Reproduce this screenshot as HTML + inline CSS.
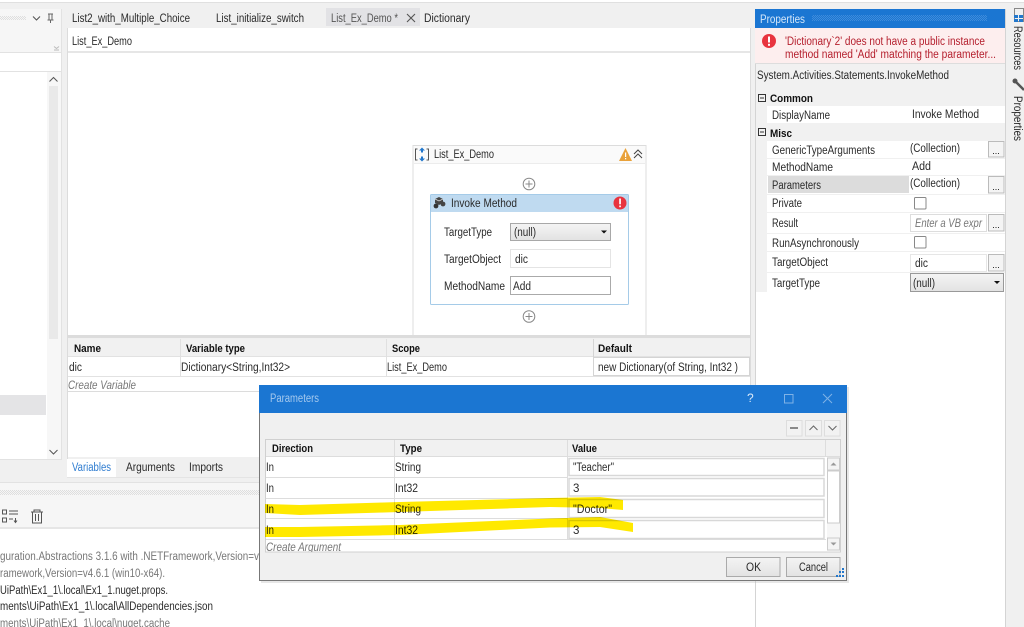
<!DOCTYPE html>
<html><head><meta charset="utf-8"><style>
html,body{margin:0;padding:0;background:#f0f0f0;width:1024px;height:627px;overflow:hidden}
svg{display:block;filter:blur(.3px)}
text{font-family:"Liberation Sans",sans-serif;font-size:11.5px;fill:#2a2a2a}
.b{font-weight:bold;fill:#111;font-size:11px}
.i{font-style:italic;fill:#777}
.g{fill:#777}
</style></head><body>
<svg width="1024" height="627" viewBox="0 0 1024 627" xmlns="http://www.w3.org/2000/svg">
<defs>
<pattern id="d" width="2" height="2" patternUnits="userSpaceOnUse"><rect width="1" height="1" fill="#dedede"/><rect x="1" y="1" width="1" height="1" fill="#dedede"/></pattern>
<pattern id="dw" width="2" height="2" patternUnits="userSpaceOnUse"><rect width="1" height="1" fill="#3f8cdb"/><rect x="1" y="1" width="1" height="1" fill="#3f8cdb"/></pattern>
<linearGradient id="cb" x1="0" y1="0" x2="0" y2="1"><stop offset="0" stop-color="#f4f4f4"/><stop offset="1" stop-color="#e2e2e2"/></linearGradient>
<clipPath id="ca"><rect x="260" y="535" width="300" height="17"/></clipPath>
</defs>
<rect width="1024" height="627" fill="#f0f0f0"/>
<rect width="1024" height="2" fill="#fff"/><rect y="2" width="1024" height="1" fill="#e0e0e0"/>

<!-- left panel -->
<rect x="0" y="9" width="61" height="43" fill="#f6f6f6"/>
<rect x="0" y="16" width="26" height="4" fill="url(#d)"/>
<path d="M33 16.500l3.500 3.500 3.500-3.500" fill="none" stroke="#555" stroke-width="1.100"/>
<path d="M48 14h5M49 14v6h3v-6M50.500 20v3M47.500 20h6" fill="none" stroke="#666" stroke-width="1"/>
<path d="M54 46.500l2.500 2 2.500-2M54 50h5" fill="none" stroke="#bbb" stroke-width="1"/>
<rect x="0" y="52" width="61" height="1" fill="#e2e2e2"/>
<rect x="0" y="53" width="61" height="18" fill="#fff"/>
<rect x="0" y="71" width="61" height="1" fill="#e2e2e2"/>
<rect x="0" y="72" width="47" height="387" fill="#fff"/>
<rect x="47" y="72" width="14" height="387" fill="#f7f7f7"/>
<rect x="49" y="86" width="9" height="253" fill="#e9e9e9"/>
<path d="M49.500 81.500l4-4 4 4" fill="none" stroke="#555" stroke-width="1"/>
<path d="M49.500 450l4 4 4-4" fill="none" stroke="#555" stroke-width="1"/>
<rect x="0" y="395" width="46" height="20" fill="#e4e4e6"/>
<rect x="61" y="9" width="1" height="451" fill="#e2e2e2"/>
<rect x="0" y="459" width="61" height="1" fill="#e2e2e2"/>

<!-- tabs -->
<text x="72" y="22" textLength="118" lengthAdjust="spacingAndGlyphs">List2_with_Multiple_Choice</text>
<text x="216" y="22" textLength="88" lengthAdjust="spacingAndGlyphs">List_initialize_switch</text>
<rect x="326" y="8" width="94" height="18" fill="#e2e2e5"/>
<text x="331" y="22" textLength="67" lengthAdjust="spacingAndGlyphs" style="fill:#555">List_Ex_Demo *</text>
<path d="M407 14l8 8M415 14l-8 8" stroke="#555" stroke-width="1.100" fill="none"/>
<text x="424" y="22" textLength="46" lengthAdjust="spacingAndGlyphs">Dictionary</text>

<!-- designer -->
<rect x="67" y="28" width="684" height="23" fill="#fff"/>
<text x="72" y="45" textLength="60" lengthAdjust="spacingAndGlyphs">List_Ex_Demo</text>
<rect x="67" y="51" width="684" height="2" fill="#e6e6e6"/>
<rect x="67" y="53" width="684" height="282" fill="#fff"/>
<rect x="67" y="28" width="1" height="432" fill="#dcdcdc"/>
<rect x="750" y="28" width="1" height="432" fill="#dcdcdc"/>
<rect x="67" y="335" width="684" height="3" fill="#dcdcdc"/>

<!-- sequence -->
<rect x="413" y="145.500" width="233" height="190" fill="#fff" stroke="#dcdcdc"/>
<rect x="414" y="146" width="231" height="17" fill="#fafafa"/>
<rect x="414" y="163" width="231" height="1" fill="#ececec"/>
<path d="M417.500 149h-2v11h2M426.500 149h2v11h-2" fill="none" stroke="#555" stroke-width="1"/>
<path d="M422 147.500l-3 3h2v2h2v-2h2zM422 161.500l-3-3h2v-2h2v2h2z" fill="#2277cc"/>
<text x="434" y="158" textLength="60" lengthAdjust="spacingAndGlyphs">List_Ex_Demo</text>
<path d="M625.500 148l6.500 13h-13z" fill="#e9a23b"/><rect x="625" y="152.500" width="1.200" height="4.500" fill="#fff"/><rect x="625" y="158" width="1.200" height="1.300" fill="#fff"/>
<path d="M634 154l4-4 4 4M634 158l4-4 4 4" fill="none" stroke="#444" stroke-width="1"/>
<circle cx="529" cy="184" r="5.800" fill="#fff" stroke="#888"/><path d="M525.500 184h7M529 180.500v7" stroke="#888"/>
<circle cx="529" cy="316.500" r="5.800" fill="#fff" stroke="#888"/><path d="M525.500 316.500h7M529 313v7" stroke="#888"/>

<rect x="430.500" y="194.500" width="198" height="110" rx="1" fill="#fff" stroke="#a5cbe8"/>
<rect x="431" y="195" width="197" height="17" fill="#bfdaf0"/>
<path d="M439 197l4 2v4l-4 2-4-2v-4z" fill="#444"/><circle cx="436" cy="206" r="2.400" fill="#333"/><circle cx="443" cy="204" r="2.400" fill="#444"/><path d="M435 199l4 2 4-2" stroke="#ddd" fill="none" stroke-width=".7"/>
<text x="451" y="207" textLength="66" lengthAdjust="spacingAndGlyphs">Invoke Method</text>
<circle cx="620" cy="203" r="6.500" fill="#e8343f"/><rect x="619.200" y="198.500" width="1.700" height="5.800" fill="#fff"/><rect x="619.200" y="205.500" width="1.700" height="1.700" fill="#fff"/>
<text x="444" y="236" textLength="48" lengthAdjust="spacingAndGlyphs">TargetType</text>
<text x="444" y="263" textLength="57" lengthAdjust="spacingAndGlyphs">TargetObject</text>
<text x="444" y="290" textLength="61" lengthAdjust="spacingAndGlyphs">MethodName</text>
<rect x="510.500" y="223.500" width="100" height="17" fill="url(#cb)" stroke="#a8a8a8"/>
<text x="514" y="236" textLength="22" lengthAdjust="spacingAndGlyphs">(null)</text>
<path d="M601 230.500h6l-3 3z" fill="#111"/>
<rect x="510.500" y="249.500" width="100" height="18" fill="#fff" stroke="#e4e4e4"/>
<text x="515" y="263" textLength="13" lengthAdjust="spacingAndGlyphs">dic</text>
<rect x="510.500" y="276.500" width="100" height="18" fill="#fff" stroke="#aaa"/>
<text x="513" y="290" textLength="18" lengthAdjust="spacingAndGlyphs">Add</text>

<!-- variables panel -->
<rect x="68" y="339" width="682" height="18" fill="#f1f1f1"/>
<rect x="68" y="357" width="682" height="19" fill="#fff"/>
<rect x="68" y="376" width="682" height="1" fill="#e2e2e2"/>
<rect x="68" y="356" width="682" height="1" fill="#e2e2e2"/>
<rect x="68" y="377" width="682" height="14" fill="#fff"/>
<rect x="68" y="391" width="682" height="1" fill="#dcdcdc"/>
<rect x="68" y="392" width="682" height="65" fill="#fff"/>
<rect x="180" y="339" width="1" height="37" fill="#e0e0e0"/><rect x="386" y="339" width="1" height="37" fill="#e0e0e0"/><rect x="593" y="339" width="1" height="37" fill="#d4d4d4"/>
<text class="b" x="74" y="352" textLength="27" lengthAdjust="spacingAndGlyphs">Name</text>
<text class="b" x="186" y="352" textLength="59" lengthAdjust="spacingAndGlyphs">Variable type</text>
<text class="b" x="392" y="352" textLength="28" lengthAdjust="spacingAndGlyphs">Scope</text>
<text class="b" x="598" y="352" textLength="34" lengthAdjust="spacingAndGlyphs">Default</text>
<text x="69" y="371" textLength="13" lengthAdjust="spacingAndGlyphs">dic</text>
<text x="181" y="371" textLength="109" lengthAdjust="spacingAndGlyphs">Dictionary&lt;String,Int32&gt;</text>
<text x="387" y="371" textLength="60" lengthAdjust="spacingAndGlyphs">List_Ex_Demo</text>
<text x="598" y="371" textLength="140" lengthAdjust="spacingAndGlyphs">new Dictionary(of String, Int32 )</text>
<rect x="593.500" y="357.500" width="156" height="18" fill="none" stroke="#d4d4d4"/>
<text class="i" x="68" y="389" textLength="68" lengthAdjust="spacingAndGlyphs">Create Variable</text>
<rect x="67" y="459" width="49" height="19" fill="#fff"/>
<text x="72" y="471" textLength="39" lengthAdjust="spacingAndGlyphs" style="fill:#2e7cd0">Variables</text>
<text x="126" y="471" textLength="49" lengthAdjust="spacingAndGlyphs">Arguments</text>
<text x="189" y="471" textLength="34" lengthAdjust="spacingAndGlyphs">Imports</text>
<rect x="67" y="477" width="684" height="1" fill="#e4e4e4"/>
<rect x="0" y="482" width="755" height="1" fill="#e2e2e2"/>

<!-- output panel -->
<rect x="0" y="483" width="755" height="44" fill="#f6f6f6"/>
<rect x="0" y="490" width="755" height="5" fill="url(#d)"/>
<rect x="2.500" y="510" width="4" height="4" fill="none" stroke="#555"/><rect x="2.500" y="518" width="4" height="4" fill="none" stroke="#555"/>
<path d="M9 511h9M9 514h9M9 519h4M15.500 518v4M14 520.500l1.500 2 1.500-2" stroke="#555" fill="none"/>
<path d="M31 512h12M34 512v-2h6v2M32.500 512v11h9v-11M35.500 514v7M38.500 514v7" stroke="#555" fill="none"/>
<rect x="0" y="527" width="755" height="2" fill="#e6e6e6"/>
<rect x="0" y="529" width="755" height="98" fill="#fff"/>
<text class="g" x="0" y="560" textLength="259" lengthAdjust="spacingAndGlyphs">guration.Abstractions 3.1.6 with .NETFramework,Version=v</text>
<text class="g" x="0" y="577" textLength="165" lengthAdjust="spacingAndGlyphs">ramework,Version=v4.6.1 (win10-x64).</text>
<text x="0" y="594" textLength="168" lengthAdjust="spacingAndGlyphs">UiPath\Ex1_1\.local\Ex1_1.nuget.props.</text>
<text x="0" y="610" textLength="213" lengthAdjust="spacingAndGlyphs">ments\UiPath\Ex1_1\.local\AllDependencies.json</text>
<text class="g" x="0" y="627" textLength="170" lengthAdjust="spacingAndGlyphs">ments\UiPath\Ex1_1\.local\nuget.cache</text>

<!-- properties -->
<rect x="755" y="9" width="250" height="618" fill="#fff"/>
<rect x="755" y="63" width="250" height="229" fill="#f1f1f1"/>
<rect x="755" y="63" width="1" height="564" fill="#d4d4d4"/><rect x="1005" y="9" width="1" height="618" fill="#d4d4d4"/>
<rect x="755" y="9" width="250" height="19" fill="#1b76d2"/>
<rect x="812" y="15" width="175" height="6" fill="url(#dw)"/>
<text x="760" y="23" textLength="45" lengthAdjust="spacingAndGlyphs" style="fill:#d5e7f9">Properties</text>
<rect x="755" y="28" width="250" height="35" fill="#fdeeee"/>
<circle cx="769" cy="41" r="7" fill="#e8343f"/><rect x="768" y="36.500" width="2" height="6" fill="#fff"/><rect x="768" y="43.800" width="2" height="2" fill="#fff"/>
<text x="785" y="45" textLength="200" lengthAdjust="spacingAndGlyphs" style="fill:#b5202e">'Dictionary`2' does not have a public instance</text>
<text x="785" y="58" textLength="211" lengthAdjust="spacingAndGlyphs" style="fill:#b5202e">method named 'Add' matching the parameter...</text>
<rect x="755" y="63" width="250" height="1" fill="#ddd"/>
<text x="757" y="79" textLength="192" lengthAdjust="spacingAndGlyphs">System.Activities.Statements.InvokeMethod</text>
<rect x="758.500" y="94.500" width="7" height="7" fill="none" stroke="#333"/><path d="M760 98h4" stroke="#333"/>
<text class="b" x="770" y="102" textLength="43" lengthAdjust="spacingAndGlyphs">Common</text>
<rect x="767" y="106" width="238" height="17" fill="#fff"/>
<text x="772" y="119" textLength="58" lengthAdjust="spacingAndGlyphs">DisplayName</text>
<text x="912" y="118" textLength="67" lengthAdjust="spacingAndGlyphs">Invoke Method</text>
<rect x="758.500" y="128.500" width="7" height="7" fill="none" stroke="#333"/><path d="M760 132h4" stroke="#333"/>
<text class="b" x="770" y="137" textLength="22" lengthAdjust="spacingAndGlyphs">Misc</text>
<rect x="767" y="141" width="238" height="151" fill="#fff"/>
<path d="M767 158.500h238M767 175.500h238M767 194.500h238M767 212.500h238M767 233.500h238M767 251.500h238M767 272.500h238" stroke="#f0f0f0"/>
<rect x="768" y="176" width="141" height="17" fill="#dcdcdc"/>
<text x="772" y="154" textLength="103" lengthAdjust="spacingAndGlyphs">GenericTypeArguments</text>
<text x="910" y="152" textLength="50" lengthAdjust="spacingAndGlyphs">(Collection)</text>
<text x="772" y="171" textLength="61" lengthAdjust="spacingAndGlyphs">MethodName</text>
<text x="912" y="170" textLength="19" lengthAdjust="spacingAndGlyphs">Add</text>
<text x="772" y="189" textLength="49" lengthAdjust="spacingAndGlyphs">Parameters</text>
<text x="910" y="187" textLength="50" lengthAdjust="spacingAndGlyphs">(Collection)</text>
<text x="772" y="207" textLength="30" lengthAdjust="spacingAndGlyphs">Private</text>
<rect x="914.500" y="197.500" width="11.500" height="11.500" rx="1" fill="#fff" stroke="#888"/>
<text x="772" y="227" textLength="26" lengthAdjust="spacingAndGlyphs">Result</text>
<rect x="910.500" y="214.500" width="76" height="17" fill="#fff" stroke="#ddd"/>
<text class="i" x="915" y="227" textLength="67" lengthAdjust="spacingAndGlyphs">Enter a VB expr</text>
<text x="772" y="247" textLength="87" lengthAdjust="spacingAndGlyphs">RunAsynchronously</text>
<rect x="914.500" y="236.500" width="11.500" height="11.500" rx="1" fill="#fff" stroke="#888"/>
<text x="772" y="266" textLength="56" lengthAdjust="spacingAndGlyphs">TargetObject</text>
<rect x="910.500" y="254.500" width="76" height="17" fill="#fff" stroke="#e6e6e6"/>
<text x="915" y="267" textLength="13" lengthAdjust="spacingAndGlyphs">dic</text>
<text x="772" y="287" textLength="48" lengthAdjust="spacingAndGlyphs">TargetType</text>
<rect x="910.500" y="273.500" width="93" height="18" fill="url(#cb)" stroke="#999"/>
<text x="913" y="287" textLength="22" lengthAdjust="spacingAndGlyphs">(null)</text>
<path d="M994 281h6l-3 3z" fill="#111"/>
<g fill="#f4f4f4" stroke="#bbb">
<rect x="988.500" y="141.500" width="15.500" height="15.500"/>
<rect x="988.500" y="176.500" width="15.500" height="16.500"/>
<rect x="988.500" y="214.500" width="15.500" height="16.500"/>
<rect x="988.500" y="254.500" width="15.500" height="16.500"/>
</g>
<g fill="#333">
<path d="M993 153h1v1h-1zM995.500 153h1v1h-1zM998 153h1v1h-1zM993 189h1v1h-1zM995.500 189h1v1h-1zM998 189h1v1h-1zM993 227h1v1h-1zM995.500 227h1v1h-1zM998 227h1v1h-1zM993 267h1v1h-1zM995.500 267h1v1h-1zM998 267h1v1h-1z"/>
</g>

<!-- side tabs -->
<rect x="1014.500" y="8.500" width="9" height="13" fill="none" stroke="#888"/>
<rect x="1014" y="15" width="4" height="3" fill="#2277cc"/><rect x="1019" y="15" width="4" height="3" fill="#2277cc"/><rect x="1014" y="19" width="4" height="3" fill="#2277cc"/><rect x="1019" y="19" width="4" height="3" fill="#2277cc"/>
<text transform="translate(1014,26) rotate(90)" textLength="44" lengthAdjust="spacingAndGlyphs">Resources</text>
<path d="M1014 80l10 10" stroke="#555" stroke-width="2.500" fill="none"/><circle cx="1015" cy="81" r="2.500" fill="#555"/>
<text transform="translate(1014,96) rotate(90)" textLength="45" lengthAdjust="spacingAndGlyphs">Properties</text>

<!-- dialog -->
<rect x="261" y="387" width="588" height="196" fill="#bbb" opacity=".35"/>
<rect x="259.500" y="385.500" width="587" height="195" fill="#f0f0f0" stroke="#777"/>
<rect x="259" y="385" width="588" height="28" fill="#1b76d2"/>
<text x="270" y="402" textLength="49" lengthAdjust="spacingAndGlyphs" style="fill:#a5c9ee">Parameters</text>
<text x="747" y="402" style="fill:#dbe9f8;font-size:12px">?</text>
<rect x="784.500" y="394.500" width="8.500" height="8.500" fill="none" stroke="#7fb2e6"/>
<path d="M823 394l9 9M832 394l-9 9" stroke="#7fb2e6" fill="none"/>
<g fill="#f2f2f2" stroke="#ddd">
<rect x="786.500" y="420.500" width="15.500" height="15.500"/><rect x="805.500" y="420.500" width="16" height="15.500"/><rect x="824.500" y="420.500" width="15.500" height="15.500"/>
</g>
<path d="M790 428h8" stroke="#666" stroke-width="1.500"/>
<path d="M809.500 430l4-4 4 4M828.500 426l4 4 4-4" stroke="#666" fill="none"/>
<rect x="265.500" y="439.500" width="575" height="112.500" fill="#fff" stroke="#d0d0d0"/>
<rect x="266" y="440" width="574" height="16" fill="#f1f1f1"/>
<rect x="266" y="456" width="574" height="1" fill="#ddd"/>
<rect x="394" y="440" width="1" height="99" fill="#ddd"/><rect x="567" y="440" width="1" height="99" fill="#ddd"/><rect x="825" y="440" width="1" height="16" fill="#ddd"/>
<rect x="266" y="477" width="302" height="1" fill="#ddd"/><rect x="266" y="498" width="302" height="1" fill="#ddd"/><rect x="266" y="518" width="302" height="1" fill="#ddd"/><rect x="266" y="539" width="560" height="1" fill="#ddd"/>
<text class="b" x="272" y="452" textLength="41" lengthAdjust="spacingAndGlyphs">Direction</text>
<text class="b" x="400" y="452" textLength="22" lengthAdjust="spacingAndGlyphs">Type</text>
<text class="b" x="572" y="452" textLength="25" lengthAdjust="spacingAndGlyphs">Value</text>
<g fill="#fff" stroke="#d8d8d8" stroke-width="1.500">
<rect x="569" y="458.500" width="255" height="17"/><rect x="569" y="478.500" width="255" height="17.500"/><rect x="569" y="499.500" width="255" height="18"/><rect x="569" y="520.500" width="255" height="18"/>
</g>
<text x="266" y="471" textLength="8" lengthAdjust="spacingAndGlyphs">In</text>
<text x="395" y="471" textLength="26" lengthAdjust="spacingAndGlyphs">String</text>
<text x="573" y="471" textLength="41" lengthAdjust="spacingAndGlyphs">"Teacher"</text>
<text x="266" y="492" textLength="8" lengthAdjust="spacingAndGlyphs">In</text>
<text x="395" y="492" textLength="23" lengthAdjust="spacingAndGlyphs">Int32</text>
<text x="573" y="492">3</text>
<text x="266" y="513" textLength="8" lengthAdjust="spacingAndGlyphs">In</text>
<text x="395" y="513" textLength="26" lengthAdjust="spacingAndGlyphs">String</text>
<text x="573" y="513" textLength="39" lengthAdjust="spacingAndGlyphs">"Doctor"</text>
<text x="266" y="534" textLength="8" lengthAdjust="spacingAndGlyphs">In</text>
<text x="395" y="534" textLength="23" lengthAdjust="spacingAndGlyphs">Int32</text>
<text x="573" y="534">3</text>
<g clip-path="url(#ca)"><text class="i" x="266" y="551" textLength="75" lengthAdjust="spacingAndGlyphs">Create Argument</text></g>
<rect x="827" y="457" width="13" height="94" fill="#f6f6f6"/>
<rect x="827.500" y="458" width="12" height="12" fill="#f4f4f4" stroke="#ccc"/>
<rect x="827.500" y="538" width="12" height="12" fill="#f4f4f4" stroke="#ccc"/>
<rect x="827.500" y="471" width="12" height="52" fill="#fff" stroke="#ccc"/>
<path d="M830.500 465.500h6l-3-3z" fill="#999"/><path d="M830.500 542.500h6l-3 3z" fill="#999"/>
<path d="M265 504L300 505L400 502L550 498L600 497L623 500L623 510L600 508L550 507L400 512L300 515L265 513Z" fill="#ffe900" style="mix-blend-mode:multiply"/>
<path d="M265 527L300 527L400 525L550 518.500L600 517L633 523L633 532L600 527L550 527.500L400 535L300 537L265 537Z" fill="#ffe900" style="mix-blend-mode:multiply"/>
<rect x="726.500" y="557.500" width="53.500" height="19" fill="url(#cb)" stroke="#aaa"/>
<text x="746" y="571" textLength="15" lengthAdjust="spacingAndGlyphs">OK</text>
<rect x="786.500" y="557.500" width="53.500" height="19" fill="url(#cb)" stroke="#aaa"/>
<text x="799" y="571" textLength="29" lengthAdjust="spacingAndGlyphs">Cancel</text>
<g fill="#2277cc"><rect x="842" y="568" width="2" height="2"/><rect x="839" y="571" width="2" height="2"/><rect x="842" y="571" width="2" height="2"/><rect x="836" y="575" width="2" height="2"/><rect x="839" y="575" width="2" height="2"/><rect x="842" y="575" width="2" height="2"/></g>
</svg>
</body></html>
